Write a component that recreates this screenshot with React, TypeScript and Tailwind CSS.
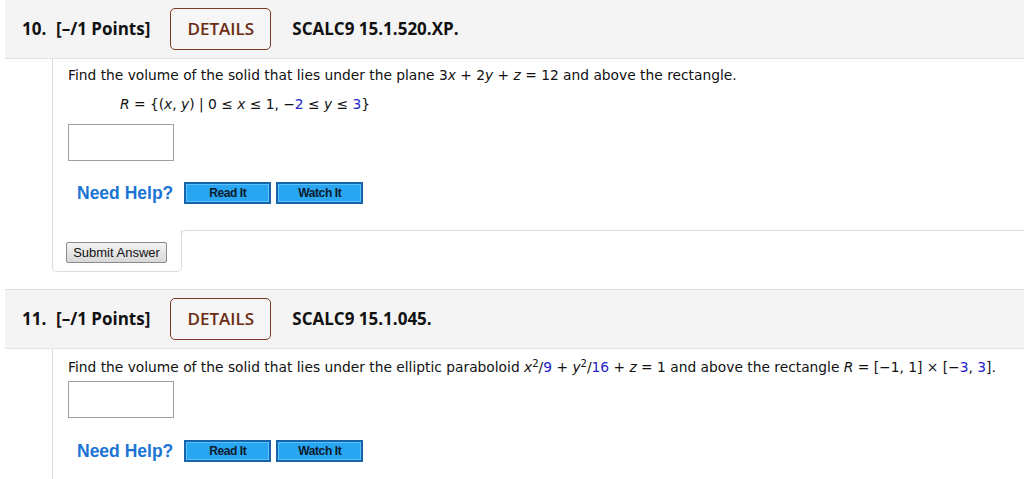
import React from "react";

const blue = "text-[#2323c8]";

function Header({ num, code }: { num: string; code: string }) {
  return (
    <div className="ml-[5px] h-[60px] bg-[#f4f4f4] border-y border-[#e2e2e2] flex items-center font-['Open_Sans',sans-serif] text-[17px] font-bold text-[#111]">
      <span className="ml-[17px] w-[34px]">{num}</span>
      <span>[–/1 Points]</span>
      <span className="ml-[20px] w-[101px] h-[42px] border-[1.5px] border-[#7b3a22] rounded-[5px] flex items-center justify-center text-[17px] font-semibold text-[#6a2c12] bg-[#f6f6f6]">
        DETAILS
      </span>
      <span className="ml-[21px] text-[17px]">{code}</span>
    </div>
  );
}

function HelpBtn({ label }: { label: string }) {
  return (
    <button className="w-[87px] h-[22px] bg-[#29a6f2] border-2 border-[#1764a8] shadow-[inset_0_0_0_1px_#5cc0ff] font-['Liberation_Sans',Arial,sans-serif] font-bold text-[12px] leading-[16px] text-[#0b1a2a] tracking-[-0.4px]">
      {label}
    </button>
  );
}

function HelpRow() {
  return (
    <div className="flex items-center">
      <span className="ml-[24px] mr-[11px] font-['Liberation_Sans',Arial,sans-serif] font-bold text-[17.5px] text-[#1b74d4]">Need Help?</span>
      <HelpBtn label="Read It" />
      <div className="w-[5px]" />
      <HelpBtn label="Watch It" />
    </div>
  );
}

export default function App() {
  return (
    <div className="w-[1024px] h-[479px] overflow-hidden bg-white font-['DejaVu_Sans',Verdana,sans-serif] text-[#111]">
      <div className="-mt-px">
        <Header num="10." code="SCALC9 15.1.520.XP." />
      </div>
      <div className="ml-[52px]">
        <div className="border-l border-[#dcdcdc] pt-[8px] h-[171px]">
          <div className="ml-[15px] text-[13.8px] leading-[16px]">
            Find the volume of the solid that lies under the plane 3<i>x</i> + 2<i>y</i> + <i>z</i> = 12 and above the rectangle.
          </div>
          <div className="ml-[67px] mt-[13px] text-[13.8px] leading-[16px]">
            <i>R</i> = {"{"}(<i>x</i>, <i>y</i>) | 0 ≤ <i>x</i> ≤ 1, −<span className={blue}>2</span> ≤ <i>y</i> ≤ <span className={blue}>3</span>{"}"}
          </div>
          <div className="ml-[15px] mt-[12px] w-[106px] h-[37px] border border-[#a0a0a0]" />
          <div className="mt-[19px]">
            <HelpRow />
          </div>
        </div>
        <div className="flex">
          <div className="w-[130px] h-[42px] border-l border-r border-b border-[#dcdcdc] rounded-b-[5px] flex items-start">
            <button className="ml-[13px] mt-[12px] w-[101px] h-[21px] border border-[#8a8a8a] rounded-[2px] bg-gradient-to-b from-[#f4f4f4] to-[#d8d8d8] font-['Liberation_Sans',Arial,sans-serif] text-[13px] leading-[18px] text-[#111]">
              Submit Answer
            </button>
          </div>
          <div className="flex-1 -ml-px border-t border-l border-[#dcdcdc] rounded-tl-[5px] h-[8px]" />
        </div>
      </div>
      <div className="mt-[17px]">
        <Header num="11." code="SCALC9 15.1.045." />
      </div>
      <div className="ml-[52px] border-l border-[#dcdcdc] h-[140px] pt-[10px]">
        <div className="ml-[15px] text-[13.8px] leading-[16px]">
          Find the volume of the solid that lies under the elliptic paraboloid <i>x</i><sup className="text-[10px] leading-none">2</sup>/<span className={blue}>9</span> + <i>y</i><sup className="text-[10px] leading-none">2</sup>/<span className={blue}>16</span> + <i>z</i> = 1 and above the rectangle <i>R</i> = [−1, 1] × [−<span className={blue}>3</span>, <span className={blue}>3</span>].
        </div>
        <div className="ml-[15px] mt-[6px] w-[106px] h-[37px] border border-[#a0a0a0]" />
        <div className="mt-[20px]">
          <HelpRow />
        </div>
      </div>
    </div>
  );
}
